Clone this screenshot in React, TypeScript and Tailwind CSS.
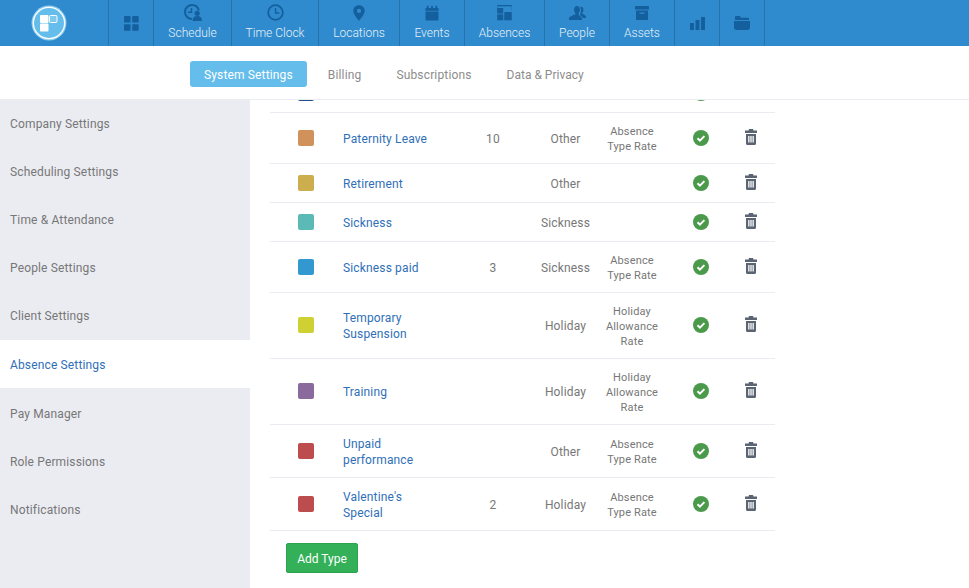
import React from "react";

const ICON = "#14609f";

function Grid() {
  return (
    <svg width="15" height="15" viewBox="0 0 15 15" fill={ICON}>
      <rect x="0" y="0" width="6.500" height="6.500" rx="0.800" />
      <rect x="8.200" y="0" width="6.500" height="6.500" rx="0.800" />
      <rect x="0" y="8.200" width="6.500" height="6.500" rx="0.800" />
      <rect x="8.200" y="8.200" width="6.500" height="6.500" rx="0.800" />
    </svg>
  );
}
function Schedule() {
  return (
    <svg width="18" height="17" viewBox="0 0 18 17" fill="none">
      <path d="M8 1a7 7 0 1 0 0 14" stroke={ICON} strokeWidth="2" />
      <path d="M8 1a7 7 0 0 1 6.800 5.500" stroke={ICON} strokeWidth="2" />
      <path d="M7.500 4v4.300H4" stroke={ICON} strokeWidth="1.500" />
      <circle cx="13.200" cy="9.300" r="2.600" fill={ICON} />
      <path d="M8.500 17c0-3.500 1.800-5 4.700-5s4.800 1.500 4.800 5z" fill={ICON} />
    </svg>
  );
}
function Clock() {
  return (
    <svg width="17" height="17" viewBox="0 0 17 17" fill="none">
      <circle cx="8.500" cy="8.500" r="7.300" stroke={ICON} strokeWidth="1.800" />
      <path d="M8.500 4v5h3.800" stroke={ICON} strokeWidth="1.500" />
    </svg>
  );
}
function Pin() {
  return (
    <svg width="12" height="16" viewBox="0 0 13 17">
      <path
        fillRule="evenodd"
        fill={ICON}
        d="M6.500 0C2.900 0 0.300 2.600 0.300 6c0 3.800 4.400 8.600 6.200 11 1.800-2.400 6.200-7.200 6.200-11C12.700 2.600 10.100 0 6.500 0zm0 4a2.300 2.300 0 1 1 0 4.600 2.300 2.300 0 0 1 0-4.600z"
      />
    </svg>
  );
}
function Calendar() {
  return (
    <svg width="14" height="16" viewBox="0 0 14 16" fill={ICON}>
      <rect x="0.500" y="3" width="13" height="2.800" />
      <rect x="0.500" y="6.500" width="13" height="9" />
      <rect x="1.800" y="0.800" width="1.800" height="3" />
      <rect x="6.100" y="0.800" width="1.800" height="3" />
      <rect x="10.400" y="0.800" width="1.800" height="3" />
    </svg>
  );
}
function Layout() {
  return (
    <svg width="15" height="16" viewBox="0 0 15 16" fill={ICON}>
      <rect x="0.200" y="0" width="14.600" height="1.300" />
      <rect x="0.200" y="1.300" width="0.800" height="4" opacity="0.4" />
      <rect x="14" y="1.300" width="0.800" height="4" opacity="0.4" />
      <rect x="0.200" y="3" width="6" height="5.500" />
      <rect x="0.200" y="9.300" width="6" height="6" />
      <rect x="7.200" y="7" width="7.600" height="8.300" />
      <rect x="6.400" y="8.500" width="1" height="1" fill="#2f8bcd" />
    </svg>
  );
}
function People() {
  return (
    <svg width="17" height="14" viewBox="0 0 17 14" fill={ICON}>
      <path d="M5 3.800C5 1.500 6.300 0 8 0s3 1.500 3 3.800c0 1.600-.7 2.800-1.500 3.500v1.100L13 12v2H0v-2c1-1.700 3.500-2.500 6.400-3.700V7.300C5.600 6.600 5 5.400 5 3.800z" />
      <path d="M11.200 1c1.700-.6 3.300.6 3.300 2.700 0 1.500-.6 2.600-1.300 3.200v.9c1.500.6 2.800 1.200 3.800 2.700V12h-3l-3.200-3.600c.8-1.200 1.300-2.900 1.200-4.500-.1-1.100-.4-2.100-.8-2.900z" />
    </svg>
  );
}
function Archive() {
  return (
    <svg width="14" height="14" viewBox="0 0 14 14" fill={ICON}>
      <rect x="0" y="0" width="14" height="3.500" />
      <path fillRule="evenodd" d="M1 4.500h12V14H1zM4.500 6.500v1.200h5V6.500z" />
    </svg>
  );
}
function Bars() {
  return (
    <svg width="15" height="13" viewBox="0 0 15 13" fill={ICON}>
      <rect x="0" y="6" width="4" height="7" />
      <rect x="5.500" y="3" width="4" height="10" />
      <rect x="11" y="0" width="4" height="13" />
    </svg>
  );
}
function Folder() {
  return (
    <svg width="16" height="14" viewBox="0 0 16 14" fill={ICON}>
      <path d="M1 3V1.200C1 .6 1.400 0 2 0h3.500c.6 0 1 .4 1 1v.8H14c.6 0 1 .4 1 1V4H1z" />
      <path d="M0 5h16v6.500c0 1.400-1 2.500-2.400 2.500H2.400C1 14 0 12.900 0 11.500z" />
    </svg>
  );
}

function Logo() {
  return (
    <svg width="36" height="36" viewBox="0 0 36 36">
      <circle cx="18" cy="18" r="17.500" fill="#8fd0f0" />
      <circle cx="18" cy="18" r="16.300" fill="#ffffff" />
      <circle cx="18" cy="18" r="15" fill="#65bdec" />
      <rect x="9" y="10" width="8.500" height="8" rx="1" fill="#ffffff" />
      <rect x="9" y="18.500" width="8.500" height="8" rx="1" fill="#ffffff" />
      <rect x="18.500" y="10.500" width="7.500" height="7" rx="1" fill="#7fc8ee" stroke="#ffffff" strokeWidth="1" />
    </svg>
  );
}

function Check() {
  return (
    <svg width="16" height="16" viewBox="0 0 16 16" className="block">
      <circle cx="8" cy="8" r="8" fill="#4b9a4c" />
      <path d="M4.500 8.300l2.400 2.300 4.500-4.500" fill="none" stroke="#ffffff" strokeWidth="2" />
    </svg>
  );
}

function Trash() {
  return (
    <svg width="12" height="16" viewBox="0 0 12 16" className="block">
      <path fill="#5b6472" d="M4 0h4l.5 1.500H12V4H0V1.500h3.500z" />
      <path
        fill="#5b6472"
        fillRule="evenodd"
        d="M1 5h10v9.500c0 .8-.6 1.500-1.400 1.500H2.400C1.600 16 1 15.300 1 14.500zM3.200 7v6.500h1.300V7zM5.350 7v6.500h1.300V7zM7.500 7v6.500h1.300V7z"
      />
    </svg>
  );
}

const nav: { w: string; label?: string; icon: React.ReactNode }[] = [
  { w: "w-[45px]", icon: <Grid /> },
  { w: "w-[78px]", label: "Schedule", icon: <Schedule /> },
  { w: "w-[87px]", label: "Time Clock", icon: <Clock /> },
  { w: "w-[81px]", label: "Locations", icon: <Pin /> },
  { w: "w-[65px]", label: "Events", icon: <Calendar /> },
  { w: "w-[80px]", label: "Absences", icon: <Layout /> },
  { w: "w-[65px]", label: "People", icon: <People /> },
  { w: "w-[65px]", label: "Assets", icon: <Archive /> },
  { w: "w-[45px]", icon: <Bars /> },
  { w: "w-[45px]", icon: <Folder /> },
];

const side = [
  "Company Settings",
  "Scheduling Settings",
  "Time & Attendance",
  "People Settings",
  "Client Settings",
];
const side2 = ["Pay Manager", "Role Permissions", "Notifications"];

const rows = [
  { c: "#d0915a", name: "Paternity Leave", n: "10", type: "Other", rate: "Absence Type Rate", tall: false },
  { c: "#ccae4e", name: "Retirement", n: "", type: "Other", rate: "", tall: false },
  { c: "#5cbab6", name: "Sickness", n: "", type: "Sickness", rate: "", tall: false },
  { c: "#3398cf", name: "Sickness paid", n: "3", type: "Sickness", rate: "Absence Type Rate", tall: false },
  { c: "#cfd033", name: "Temporary Suspension", n: "", type: "Holiday", rate: "Holiday Allowance Rate", tall: true },
  { c: "#8a6a9c", name: "Training", n: "", type: "Holiday", rate: "Holiday Allowance Rate", tall: true },
  { c: "#bd4c4e", name: "Unpaid performance", n: "", type: "Other", rate: "Absence Type Rate", tall: false },
  { c: "#bd4c4e", name: "Valentine's Special", n: "2", type: "Holiday", rate: "Absence Type Rate", tall: false },
];

const cols = "grid grid-cols-[73px_115px_70px_75px_58px_80px_20px_14px]";

export default function App() {
  return (
    <div className="h-[588px] w-[969px] overflow-hidden bg-white font-['Roboto',sans-serif] text-[12px] tracking-[0.15px] text-[#777777]">
      <header className="relative z-10 flex h-[46px] bg-[#2f8bcd]">
        <div className="flex w-[109px] items-center border-r border-[#2672ab] pl-[31px]">
          <div className="-mt-[1px]">
            <Logo />
          </div>
        </div>
        {nav.map((n, i) => (
          <div
            key={i}
            className={`flex ${n.w} flex-col items-center border-r border-[#2672ab] ${n.label ? "justify-start" : "justify-center"}`}
          >
            {n.label ? (
              <>
                <div className="flex h-[25px] items-center">{n.icon}</div>
                <div className="text-[12px] leading-[16px] font-light tracking-normal text-[#e6f1f9]">{n.label}</div>
              </>
            ) : (
              n.icon
            )}
          </div>
        ))}
      </header>

      <div className="relative z-10 flex h-[54px] items-start gap-[7px] border-b border-[#ebecf2] bg-white pt-[15px] pl-[190px] text-[#8c8c8c]">
        <div className="flex h-[26px] items-center rounded-[3px] bg-[#65bdec] px-[14px] pt-[1px] text-white">System Settings</div>
        <div className="flex h-[26px] items-center px-[14px] pt-[1px]">Billing</div>
        <div className="flex h-[26px] items-center px-[14px] pt-[1px]">Subscriptions</div>
        <div className="flex h-[26px] items-center px-[14px] pt-[1px] tracking-normal">Data &amp; Privacy</div>
      </div>

      <div className="flex h-[488px]">
        <aside className="w-[250px] shrink-0 bg-[#ebecf2]">
          {side.map((s) => (
            <div key={s} className="flex h-[48px] items-center pl-[10px]">
              {s}
            </div>
          ))}
          <div className="flex h-[48px] items-center bg-white pt-[2px] pl-[10px] text-[#2f6fb7]">Absence Settings</div>
          <div className="pt-[2px]">
            {side2.map((s) => (
              <div key={s} className="flex h-[48px] items-center pl-[10px]">
                {s}
              </div>
            ))}
          </div>
        </aside>

        <main className="box-content w-[505px] pl-[20px]">
          <div className="w-[505px]">
            <div className="flex h-[13px] border-b border-[#ebecf2]">
              <div className="-mt-[15px] ml-[28px] h-[16px] w-[16px] rounded-[2px] bg-[#1f4f86]" />
              <div className="-mt-[15px] ml-[379px]">
                <Check />
              </div>
            </div>
            {rows.map((r) => (
              <div
                key={r.name}
                className={`${cols} items-center border-b border-[#ebecf2] pt-[10px] ${r.tall ? "pb-[11px]" : "pb-[10px]"}`}
              >
                <div className="pl-[28px]">
                  <div className="h-[16px] w-[16px] rounded-[2px]" style={{ backgroundColor: r.c }} />
                </div>
                <div className="w-[100px] translate-y-[1px] leading-[16px] text-[#2f6fb7]">{r.name}</div>
                <div className="translate-y-[1px] text-center leading-[18px]">{r.n}</div>
                <div className="translate-y-[1px] text-center leading-[18px]">{r.type}</div>
                <div className={`translate-y-[1px] text-center text-[11px] leading-[15px] ${r.tall ? "-mb-[1px]" : ""}`}>
                  {r.rate}
                </div>
                <div className="flex justify-center">
                  <Check />
                </div>
                <div className="-mt-[2px] flex h-[18px] items-center justify-center">
                  <Trash />
                </div>
                <div />
              </div>
            ))}
            <div className="pt-[12px] pl-[16px]">
              <button className="h-[30px] w-[72px] rounded-[2px] border border-[#2ea34f] bg-[#33b058] pt-[1px] tracking-normal text-white">
                Add Type
              </button>
            </div>
          </div>
        </main>
      </div>
    </div>
  );
}
